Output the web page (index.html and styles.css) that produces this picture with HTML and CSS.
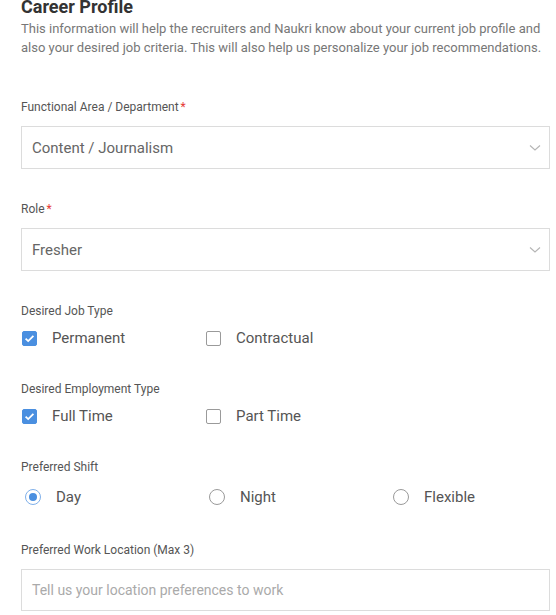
FILE: index.html
```html
<!DOCTYPE html>
<html>
<head>
<meta charset="utf-8">
<link rel="stylesheet" href="styles.css">
</head>
<body>
<div class="page">
  <h2 class="title">Career Profile</h2>
  <p class="desc">This information will help the recruiters and Naukri know about your current job profile and also your desired job criteria. This will also help us personalize your job recommendations.</p>

  <div class="field field-first">
    <div class="label">Functional Area / Department<span class="req">*</span></div>
    <div class="select">
      <span class="select-text">Content / Journalism</span>
      <svg class="chev" width="12" height="8" viewBox="0 0 12 8"><path d="M1 1.5 L6 6 L11 1.5" fill="none" stroke="#b5b5b5" stroke-width="1.1"/></svg>
    </div>
  </div>

  <div class="field">
    <div class="label">Role<span class="req">*</span></div>
    <div class="select">
      <span class="select-text">Fresher</span>
      <svg class="chev" width="12" height="8" viewBox="0 0 12 8"><path d="M1 1.5 L6 6 L11 1.5" fill="none" stroke="#b5b5b5" stroke-width="1.1"/></svg>
    </div>
  </div>

  <div class="field">
    <div class="label">Desired Job Type</div>
    <div class="options">
      <div class="opt"><span class="cb checked"><svg width="15" height="15" viewBox="0 0 15 15"><path d="M3.6 7.6 L6.2 10.1 L11.4 4.8" fill="none" stroke="#fff" stroke-width="1.8"/></svg></span><span class="opt-text">Permanent</span></div>
      <div class="opt"><span class="cb"></span><span class="opt-text">Contractual</span></div>
    </div>
  </div>

  <div class="field field-gap">
    <div class="label">Desired Employment Type</div>
    <div class="options">
      <div class="opt"><span class="cb checked"><svg width="15" height="15" viewBox="0 0 15 15"><path d="M3.6 7.6 L6.2 10.1 L11.4 4.8" fill="none" stroke="#fff" stroke-width="1.8"/></svg></span><span class="opt-text">Full Time</span></div>
      <div class="opt"><span class="cb"></span><span class="opt-text">Part Time</span></div>
    </div>
  </div>

  <div class="field field-gap">
    <div class="label">Preferred Shift</div>
    <div class="options radios">
      <div class="opt"><span class="rd checked"><span class="dot"></span></span><span class="opt-text">Day</span></div>
      <div class="opt"><span class="rd"></span><span class="opt-text">Night</span></div>
      <div class="opt"><span class="rd"></span><span class="opt-text">Flexible</span></div>
    </div>
  </div>

  <div class="field field-loc">
    <div class="label">Preferred Work Location (Max 3)</div>
    <div class="input">Tell us your location preferences to work</div>
  </div>
</div>
</body>
</html>
```

FILE: styles.css
```css
html, body {
  margin: 0;
  padding: 0;
  background: #fff;
}
body {
  font-family: Roboto, "Liberation Sans", sans-serif;
  overflow: hidden;
}
.page {
  padding: 0 6px 0 21px;
}
.title {
  margin: -3px 0 0 0;
  font-size: 18px;
  line-height: 20px;
  font-weight: 700;
  color: #333;
}
.desc {
  margin: 2px 0 0 0;
  font-size: 13px;
  line-height: 19px;
  color: #777;
}
.field {
  margin-top: 32px;
}
.field-first {
  margin-top: 42px;
}
.field-gap {
  margin-top: 33px;
}
.label {
  font-size: 12px;
  line-height: 16px;
  color: #555;
}
.req {
  color: #e53935;
  margin-left: 2px;
}
.select {
  margin-top: 11px;
  height: 43px;
  box-sizing: border-box;
  border: 1px solid #dcdcdc;
  display: flex;
  align-items: center;
  justify-content: space-between;
  padding: 0 8px 0 10px;
}
.select-text {
  font-size: 15px;
  color: #666;
}
.chev {
  display: block;
}
.options {
  display: flex;
  margin-top: 9px;
  height: 20px;
  align-items: center;
}
.opt {
  display: flex;
  align-items: center;
  width: 184px;
  flex-shrink: 0;
}
.opt-text {
  font-size: 15px;
  color: #555;
}
.cb {
  width: 15px;
  height: 15px;
  box-sizing: border-box;
  border: 1px solid #9a9a9a;
  border-radius: 2px;
  margin: 0 15px 0 1px;
  display: flex;
}
.cb.checked {
  background: #4a8fe0;
  border-color: #4a8fe0;
}
.cb svg {
  display: block;
  margin: -1px;
}
.radios {
  margin-top: 12px;
}
.rd {
  width: 16px;
  height: 16px;
  box-sizing: border-box;
  border: 1px solid #9a9a9a;
  border-radius: 50%;
  margin: 0 15px 0 4px;
  display: flex;
  align-items: center;
  justify-content: center;
}
.rd.checked {
  border-color: #7fb0ea;
}
.dot {
  width: 8px;
  height: 8px;
  border-radius: 50%;
  background: #4a8fe0;
}
.field-loc {
  margin-top: 35px;
}
.input {
  margin-top: 11px;
  height: 42px;
  border: 1px solid #dcdcdc;
  box-sizing: border-box;
  display: flex;
  align-items: center;
  padding: 0 10px;
  font-size: 14px;
  color: #aaa;
}
```
